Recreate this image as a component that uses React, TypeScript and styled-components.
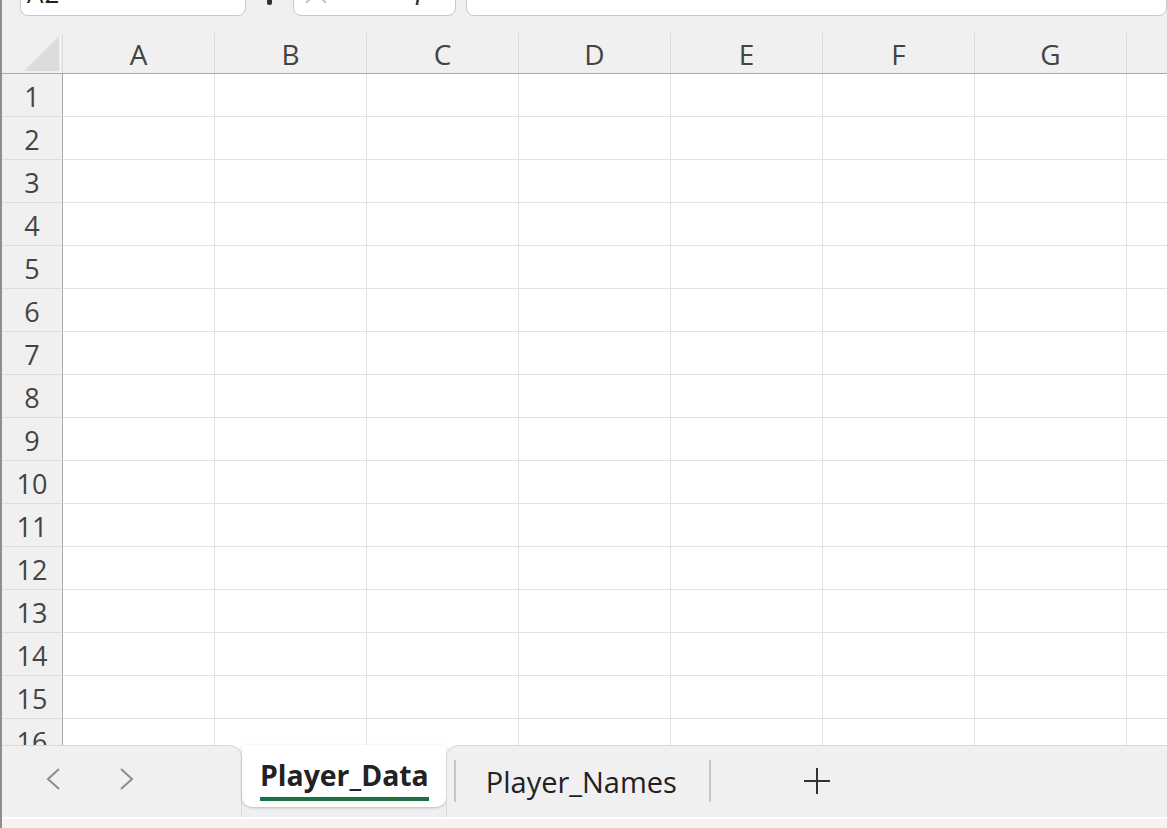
import styled, { createGlobalStyle } from 'styled-components'

const GlobalStyle = createGlobalStyle`
  html, body {
    margin: 0;
    padding: 0;
    background: #f0f0f0;
  }
  * {
    box-sizing: border-box;
  }
`

const COLUMNS = ['A', 'B', 'C', 'D', 'E', 'F', 'G', '']
const ROWS = Array.from({ length: 16 }, (_, i) => i + 1)

const Window = styled.div`
  width: 1167px;
  height: 828px;
  display: flex;
  flex-direction: column;
  background: #f0f0f0;
  border-left: 2px solid #8e8e8e;
  font-family: 'Open Sans', 'Noto Sans', sans-serif;
  overflow: hidden;
`

const FormulaBar = styled.div`
  height: 33px;
  flex-shrink: 0;
  display: flex;
  align-items: flex-start;
  padding-left: 18px;
  overflow: hidden;
`

const FieldBox = styled.div<{ $width: number; $flex?: boolean }>`
  width: ${props => props.$width}px;
  flex: ${props => (props.$flex ? '1 1 auto' : '0 0 auto')};
  min-width: 0;
  height: 44px;
  margin-top: -28px;
  background: #ffffff;
  border: 1px solid #c9c9c9;
  border-radius: 8px;
  display: flex;
  align-items: flex-end;
  padding: 0 6px 2px;
  color: #222;
  font-size: 26px;
  line-height: 1;
  overflow: hidden;
`

const NameText = styled.span`
  margin-bottom: 7px;
  letter-spacing: 1px;
`

const Dots = styled.div`
  width: 47px;
  height: 5px;
  flex-shrink: 0;
  display: flex;
  justify-content: center;
  &::after {
    content: '';
    width: 5px;
    height: 5px;
    margin-left: -1px;
    border-radius: 0 0 2px 2px;
    background: #333;
  }
`

const Fx = styled.span`
  margin-left: auto;
  margin-right: 12px;
  margin-bottom: 9px;
  font-family: 'Liberation Serif', 'DejaVu Serif', serif;
  font-style: italic;
  font-size: 30px;
  color: #333;
`

const Gap = styled.div<{ $w: number }>`
  width: ${props => props.$w}px;
  flex-shrink: 0;
`

const Sheet = styled.div`
  flex: 1;
  display: flex;
  flex-direction: column;
  background: #ffffff;
  overflow: hidden;
`

const HeaderRow = styled.div`
  display: flex;
  height: 41px;
  flex-shrink: 0;
  background: #f0f0f0;
  border-bottom: 1px solid #a9a9a9;
`

const Corner = styled.div`
  width: 61px;
  flex-shrink: 0;
  border-right: 1px solid #dadada;
  display: flex;
  align-items: flex-end;
  justify-content: flex-end;
  padding: 0 3px 2px 0;
`

const ColHeader = styled.div`
  width: 152px;
  flex-shrink: 0;
  border-right: 1px solid #dadada;
  display: flex;
  align-items: center;
  justify-content: center;
  font-size: 28px;
  color: #444;
  padding-top: 1px;
`

const Row = styled.div`
  display: flex;
  height: 43px;
  flex-shrink: 0;
`

const RowHeader = styled.div`
  width: 61px;
  flex-shrink: 0;
  background: #f0f0f0;
  border-right: 1px solid #a9a9a9;
  border-bottom: 1px solid #dcdcdc;
  display: flex;
  align-items: center;
  justify-content: center;
  font-size: 27px;
  color: #444;
  padding-top: 2px;
`

const Cell = styled.div`
  width: 152px;
  flex-shrink: 0;
  border-right: 1px solid #e1e1e1;
  border-bottom: 1px solid #e1e1e1;
`

const TabBar = styled.div`
  height: 72px;
  flex-shrink: 0;
  display: flex;
  background: linear-gradient(#ffffff 0, #ffffff 20px, #f0f0f0 20px);
`

const NavArea = styled.div`
  width: 240px;
  flex-shrink: 0;
  background: #f0f0f0;
  border-top: 1px solid #d9d9d9;
  border-right: 1px solid #d9d9d9;
  border-top-right-radius: 12px;
  display: flex;
  align-items: center;
  padding: 0 0 6px 43px;
  gap: 58px;
`

const NavButton = styled.div`
  width: 16px;
  height: 24px;
  display: flex;
  align-items: center;
  justify-content: center;
`

const ActiveTab = styled.div`
  height: 62px;
  flex-shrink: 0;
  background: #ffffff;
  border-radius: 0 0 10px 10px;
  box-shadow: 0 1px 3px rgba(0, 0, 0, 0.22);
  padding: 0 17px 6px 18px;
  display: flex;
  flex-direction: column;
  align-items: flex-start;
  justify-content: flex-end;
`

const ActiveLabel = styled.span`
  font-size: 28.4px;
  font-weight: 700;
  color: #222;
  line-height: 1;
  padding-bottom: 8px;
  border-bottom: 4px solid #1a7343;
`

const TabsRest = styled.div`
  flex: 1;
  background: #f0f0f0;
  border-top: 1px solid #d9d9d9;
  border-left: 1px solid #d9d9d9;
  border-top-left-radius: 12px;
  display: flex;
  align-items: center;
  padding: 0 0 1px 7px;
`

const Divider = styled.div`
  width: 2px;
  height: 42px;
  background: #c6c6c6;
  flex-shrink: 0;
`

const SheetTab = styled.div`
  padding: 0 32px 0 30px;
  font-size: 29px;
  color: #222;
  line-height: 1;
`

const AddButton = styled.div`
  width: 30px;
  height: 30px;
  margin-left: 91px;
  display: flex;
  align-items: center;
  justify-content: center;
`

const StatusBar = styled.div`
  height: 11px;
  flex-shrink: 0;
  background: #f3f3f3;
  border-top: 2px solid #ffffff;
  padding: 3px 0 0 203px;
`

const Chevron = ({ dir }: { dir: 'left' | 'right' }) => (
  <svg width="16" height="24" viewBox="0 0 16 24">
    <path
      d={dir === 'left' ? 'M14 2 L3 12 L14 22' : 'M2 2 L13 12 L2 22'}
      fill="none"
      stroke="#8c8c8c"
      strokeWidth="2"
    />
  </svg>
)

export default function App() {
  return (
    <>
      <GlobalStyle />
      <Window>
        <FormulaBar>
          <FieldBox $width={226}>
            <NameText>A2</NameText>
          </FieldBox>
          <Dots />
          <FieldBox $width={163}>
            <svg width="100" height="20" viewBox="0 0 100 20" style={{ marginBottom: 10 }}>
              <path d="M6 0 L26 20 M26 0 L6 20" stroke="#c4c4c4" strokeWidth="2" />
              <path d="M62 4 L68 12 L80 -6" stroke="#b5b5b5" strokeWidth="2" fill="none" />
            </svg>
            <Fx>fx</Fx>
          </FieldBox>
          <Gap $w={10} />
          <FieldBox $width={720} $flex />
        </FormulaBar>
        <Sheet>
          <HeaderRow>
            <Corner>
              <svg width="35" height="35" viewBox="0 0 35 35">
                <path d="M35 0 L35 35 L0 35 Z" fill="#dcdcdc" />
              </svg>
            </Corner>
            {COLUMNS.map((c, i) => (
              <ColHeader key={i}>{c}</ColHeader>
            ))}
          </HeaderRow>
          {ROWS.map(r => (
            <Row key={r}>
              <RowHeader>{r}</RowHeader>
              {COLUMNS.map((_, i) => (
                <Cell key={i} />
              ))}
            </Row>
          ))}
        </Sheet>
        <TabBar>
          <NavArea>
            <NavButton>
              <Chevron dir="left" />
            </NavButton>
            <NavButton>
              <Chevron dir="right" />
            </NavButton>
          </NavArea>
          <ActiveTab>
            <ActiveLabel>Player_Data</ActiveLabel>
          </ActiveTab>
          <TabsRest>
            <Divider />
            <SheetTab>Player_Names</SheetTab>
            <Divider />
            <AddButton>
              <svg width="28" height="28" viewBox="0 0 28 28">
                <path d="M14 1 V27 M1 14 H27" stroke="#333" strokeWidth="2" />
              </svg>
            </AddButton>
          </TabsRest>
        </TabBar>
        <StatusBar>
          <svg width="8" height="6" viewBox="0 0 8 6">
            <path d="M1 6 L4 2 L7 6" stroke="#333" strokeWidth="2" fill="none" />
          </svg>
        </StatusBar>
      </Window>
    </>
  )
}
